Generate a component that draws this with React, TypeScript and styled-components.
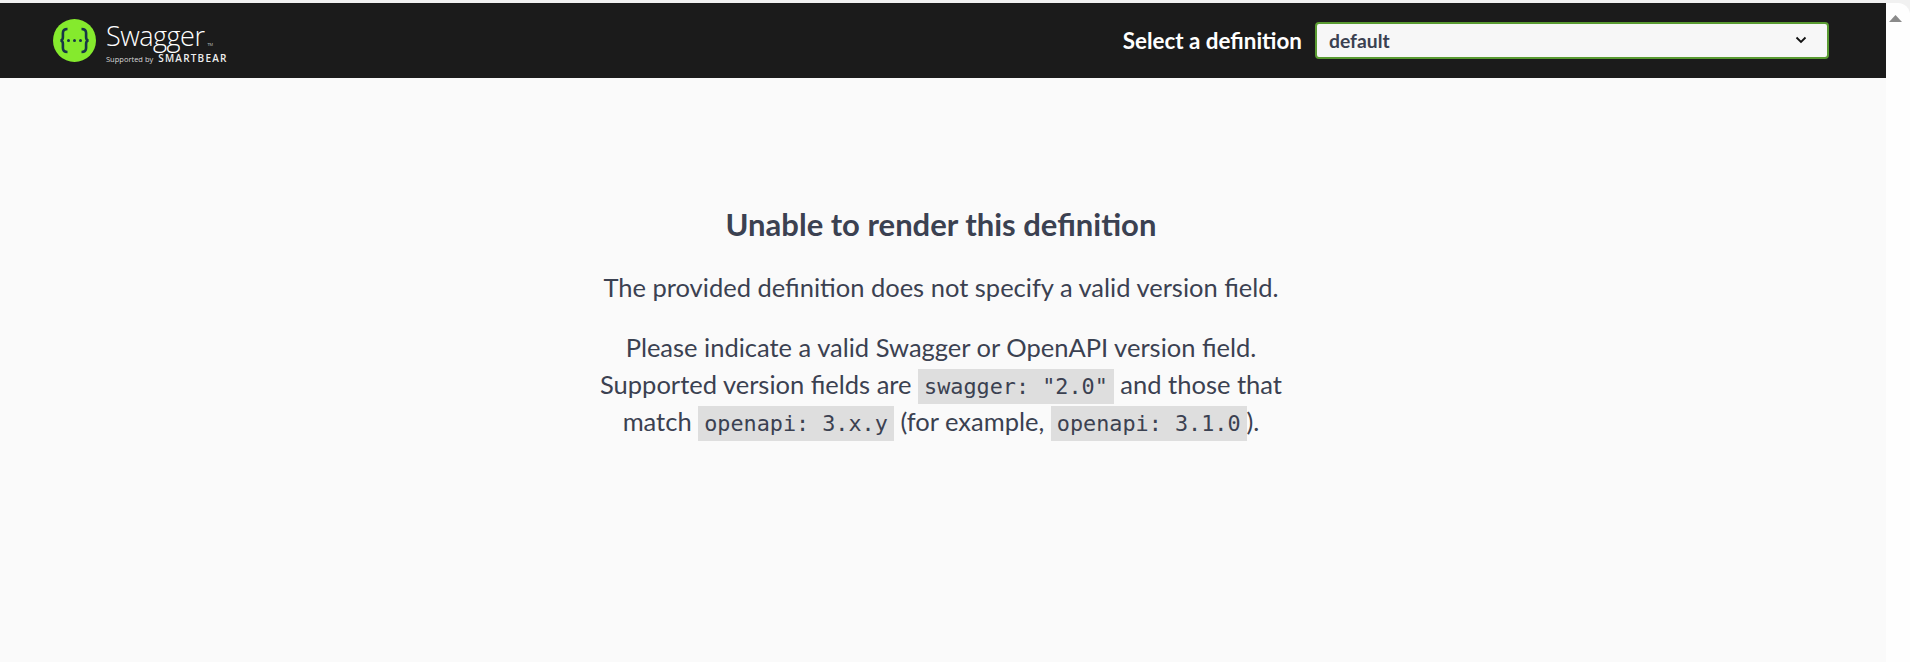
import React from 'react';
import styled, { createGlobalStyle } from 'styled-components';

const GlobalStyle = createGlobalStyle`
  html, body {
    margin: 0;
    padding: 0;
    height: 100%;
    overflow: hidden;
    background: #f1f1f1;
  }
  #root {
    height: 100%;
  }
`;

const Frame = styled.div`
  display: flex;
  height: 662px;
  padding-top: 3px;
  box-sizing: border-box;
  font-family: "Lato", "Noto Sans", sans-serif;
  color: #3b4151;
`;

const Main = styled.div`
  flex: 1;
  min-width: 0;
  background: #fafafa;
`;

const Topbar = styled.header`
  display: flex;
  align-items: center;
  justify-content: space-between;
  height: 75px;
  padding: 0 57px 0 53px;
  background: #1b1b1b;
`;

const Logo = styled.a`
  display: flex;
  align-items: center;
  gap: 10px;
  color: #fff;
`;

const LogoWords = styled.div`
  display: flex;
  flex-direction: column;
  padding-top: 12px;
`;

const LogoName = styled.span`
  font-family: "Open Sans", sans-serif;
  font-weight: 300;
  font-size: 27px;
  line-height: 16px;
  letter-spacing: -0.5px;
`;

const LogoMark = styled.sup`
  margin-left: 3px;
  font-size: 4px;
  line-height: 0;
  letter-spacing: 0;
  vertical-align: baseline;
`;

const LogoSupport = styled.span`
  display: flex;
  align-items: baseline;
  gap: 5px;
  margin-top: 7px;
  font-family: "Open Sans", sans-serif;
  font-size: 7.5px;
  line-height: 12px;
  color: #d8d8d8;
`;

const LogoBrand = styled.b`
  font-size: 10px;
  font-weight: 600;
  letter-spacing: 1.2px;
  color: #eee;
`;

const Picker = styled.label`
  display: flex;
  align-items: center;
  gap: 13px;
  font-size: 22.4px;
  font-weight: 700;
  color: #fff;
`;

const SelectBox = styled.div`
  position: relative;
  width: 514px;
  height: 37px;
`;

const Select = styled.select`
  appearance: none;
  width: 100%;
  height: 100%;
  box-sizing: border-box;
  padding: 0 40px 0 12px;
  border: 2px solid #5a9b32;
  border-radius: 4px;
  outline: none;
  background: #f7f7f7;
  font-family: inherit;
  font-size: 19.3px;
  font-weight: 700;
  color: #3b4151;
`;

const Chevron = styled.svg`
  position: absolute;
  top: 12px;
  right: 22px;
  width: 12px;
  height: 12px;
  pointer-events: none;
`;

const ErrorBlock = styled.section`
  display: flex;
  flex-direction: column;
  align-items: center;
  padding: 128px 4px 0 0;
  text-align: center;
`;

const Heading = styled.h2`
  margin: 0 0 27px;
  font-size: 31px;
  line-height: 36px;
  font-weight: 700;
`;

const Message = styled.p`
  margin: 0 0 23px;
  font-size: 25.5px;
  line-height: 37px;
`;

const Code = styled.code`
  padding: 5px 6px;
  background: #dedede;
  font-family: "DejaVu Sans Mono", monospace;
  font-size: 21.8px;
  line-height: 1;
`;

const Scrollbar = styled.aside`
  position: relative;
  width: 24px;
  background: #fefefe;
  border-top-right-radius: 12px;
`;

const ScrollArrow = styled.svg`
  position: absolute;
  top: 12px;
  left: 3px;
  width: 13px;
  height: 7px;
`;

export default function App() {
  return (
    <>
      <GlobalStyle />
      <Frame>
        <Main>
          <Topbar>
            <Logo>
              <svg width="43" height="43" viewBox="0 0 43 43">
                <circle cx="21.5" cy="21.5" r="21.5" fill="#85ea2d" />
                <path
                  d="M14.5 10c-3.4 0-4.6 1.3-4.6 4v4.2c0 1.9-.7 3-2.3 3.3 1.6.3 2.3 1.4 2.3 3.3V29c0 2.7 1.2 4 4.6 4M28.5 10c3.4 0 4.6 1.3 4.6 4v4.2c0 1.9.7 3 2.3 3.3-1.6.3-2.3 1.4-2.3 3.3V29c0 2.7-1.2 4-4.6 4"
                  fill="none"
                  stroke="#173647"
                  strokeWidth="2.6"
                />
                <circle cx="15.5" cy="21.5" r="1.5" fill="#173647" />
                <circle cx="21.5" cy="21.5" r="1.5" fill="#173647" />
                <circle cx="27.5" cy="21.5" r="1.5" fill="#173647" />
              </svg>
              <LogoWords>
                <LogoName>
                  Swagger<LogoMark>TM</LogoMark>
                </LogoName>
                <LogoSupport>
                  Supported by <LogoBrand>SMARTBEAR</LogoBrand>
                </LogoSupport>
              </LogoWords>
            </Logo>
            <Picker>
              Select a definition
              <SelectBox>
                <Select defaultValue="default">
                  <option value="default">default</option>
                </Select>
                <Chevron viewBox="0 0 12 12">
                  <path d="M1.5 3.5 6 8l4.5-4.5" fill="none" stroke="#111" strokeWidth="1.8" />
                </Chevron>
              </SelectBox>
            </Picker>
          </Topbar>
          <ErrorBlock>
            <Heading>Unable to render this definition</Heading>
            <Message>The provided definition does not specify a valid version field.</Message>
            <Message>
              Please indicate a valid Swagger or OpenAPI version field.
              <br />
              Supported version fields are <Code>swagger: "2.0"</Code> and those that
              <br />
              match <Code>openapi: 3.x.y</Code> (for example, <Code>openapi: 3.1.0</Code>).
            </Message>
          </ErrorBlock>
        </Main>
        <Scrollbar>
          <ScrollArrow viewBox="0 0 13 7">
            <path d="M6.5 0 13 7H0Z" fill="#8a8a8a" />
          </ScrollArrow>
        </Scrollbar>
      </Frame>
    </>
  );
}
